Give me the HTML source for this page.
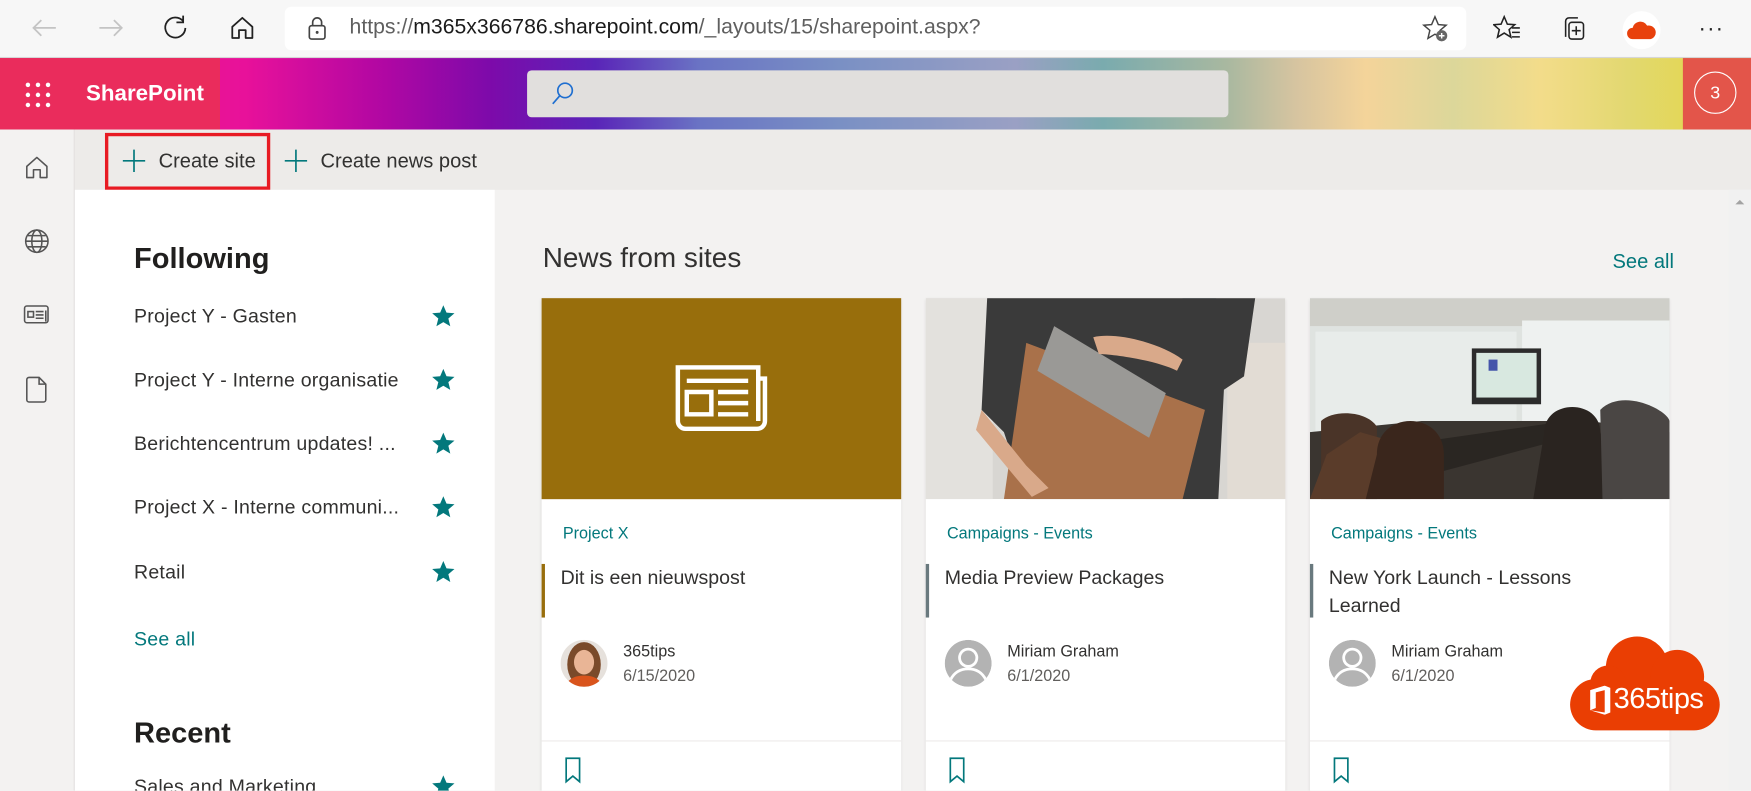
<!DOCTYPE html>
<html><head><meta charset="utf-8"><style>
html,body{margin:0;padding:0;width:1751px;height:791px;overflow:hidden;background:#f3f2f1}
#w{position:absolute;left:0;top:0;width:1568px;height:708px;transform:scale(1.11671);transform-origin:0 0;font-family:"Liberation Sans",Arial,sans-serif;overflow:hidden;background:#f3f2f1}
.a{position:absolute}
.item{position:absolute;left:120px;font-size:17.5px;color:#323130;letter-spacing:.2px}
.star{position:absolute;left:386px;width:22px;height:22px}
.card{position:absolute;top:267px;width:322px;height:460px;background:#fff;box-shadow:0 1px 3px rgba(0,0,0,.12)}
.site{position:absolute;left:19px;top:203px;font-size:14.5px;color:#03787c}
.title{position:absolute;left:0;top:238px;height:48px;border-left:3px solid #69797e;padding-left:14px;font-size:17.5px;color:#323130;line-height:25px;width:250px}
.auth{position:absolute;left:73px;top:309px;font-size:14.5px;color:#323130}
.date{position:absolute;left:73px;top:331px;font-size:14.5px;color:#605e5c}
.div{position:absolute;left:0;right:0;top:396px;border-top:1px solid #edebe9}
.bm{position:absolute;left:20px;top:411px}
</style></head><body><div id="w">
<div class="a" style="left:0;top:0;width:1568px;height:51px;background:#f7f7f7;border-bottom:1px solid #d6d6d6"></div>
<svg class="a" style="left:26px;top:13px" width="28" height="24" viewBox="0 0 28 24"><path d="M24 12H4M11 5L4 12l7 7" fill="none" stroke="#c4c4c4" stroke-width="1.6"/></svg>
<svg class="a" style="left:85px;top:13px" width="28" height="24" viewBox="0 0 28 24"><path d="M4 12h20M17 5l7 7-7 7" fill="none" stroke="#c4c4c4" stroke-width="1.6"/></svg>
<svg class="a" style="left:144px;top:12px" width="26" height="26" viewBox="0 0 26 26"><path d="M20 7A9 9 0 1 0 22 13M20 2v6h-6" fill="none" stroke="#222" stroke-width="1.6"/></svg>
<svg class="a" style="left:204px;top:12px" width="26" height="26" viewBox="0 0 26 26"><path d="M4 12L13 4l9 8v10h-6v-7h-6v7H4z" fill="none" stroke="#222" stroke-width="1.6" stroke-linejoin="round"/></svg>
<div class="a" style="left:255px;top:6px;width:1058px;height:39px;background:#fff;border-radius:6px"></div>
<svg class="a" style="left:274px;top:13px" width="20" height="24" viewBox="0 0 20 24"><rect x="3" y="10" width="14" height="12" rx="2" fill="none" stroke="#444" stroke-width="1.5"/><path d="M6 10V7a4 4 0 0 1 8 0v3" fill="none" stroke="#444" stroke-width="1.5"/><circle cx="10" cy="16" r="1.3" fill="#444"/></svg>
<div class="a" style="left:313px;top:14px;font-size:19px;color:#5f5f5f">https://<span style="color:#1b1b1b">m365x366786.sharepoint.com</span>/_layouts/15/sharepoint.aspx?</div>
<svg class="a" style="left:1273px;top:13px" width="28" height="28" viewBox="0 0 28 28"><path d="M12 2l3 7 7 .6-5.4 4.6 1.7 7.2L12 17.6 5.7 21.4l1.7-7.2L2 9.6 9 9z" fill="none" stroke="#444" stroke-width="1.3"/><circle cx="18" cy="19" r="5" fill="#666"/><path d="M18 16.5v5M15.5 19h5" stroke="#fff" stroke-width="1.3"/></svg>
<svg class="a" style="left:1337px;top:13px" width="28" height="26" viewBox="0 0 28 26"><path d="M10 2l2.8 6.6 6.6.5-5 4.4 1.6 6.8L10 16.6 4 20.3l1.6-6.8-5-4.4 6.6-.5z" fill="none" stroke="#222" stroke-width="1.4"/><path d="M17 12h7M17 16h7M17 20h7" stroke="#222" stroke-width="1.4"/></svg>
<svg class="a" style="left:1396px;top:12px" width="28" height="28" viewBox="0 0 28 28"><path d="M6 21V7a3 3 0 0 1 3-3h8" fill="none" stroke="#222" stroke-width="1.4"/><rect x="9" y="8" width="13" height="15" rx="2.5" fill="none" stroke="#222" stroke-width="1.4"/><path d="M15.5 11.5v8M11.5 15.5h8" stroke="#222" stroke-width="1.4"/></svg>
<div class="a" style="left:1453px;top:10px;width:34px;height:34px;border-radius:50%;background:#fff"></div>
<svg class="a" style="left:1457px;top:17px" width="26" height="20" viewBox="0 0 26 20"><path d="M5 18a5 5 0 0 1 0-10 7 7 0 0 1 13-2 5 5 0 0 1 3 12z" fill="#e8410c"/></svg>
<div class="a" style="left:1521px;top:15px;font-size:20px;color:#222;letter-spacing:1px">···</div>
<div class="a" style="left:0;top:52px;width:1568px;height:64px;background:linear-gradient(90deg,#e4207a 0%,#e8119a 14%,#b007a3 22%,#7d0aaa 28%,#5a24b8 34%,#6a74c4 40%,#7a90c4 48%,#9aa0c4 58%,#7aabae 63%,#a8b8a0 70%,#d6c4a0 74%,#f4d49a 78%,#dcd79a 83%,#f3dc8a 88%,#e2d870 93%,#e3d75a 96%)"></div>
<div class="a" style="left:0;top:52px;width:197px;height:64px;background:#ea2c5c"></div>
<svg class="a" style="left:22px;top:73px" width="24" height="24" viewBox="0 0 24 24" fill="#fff"><circle cx="3" cy="3" r="2"/><circle cx="12" cy="3" r="2"/><circle cx="21" cy="3" r="2"/><circle cx="3" cy="12" r="2"/><circle cx="12" cy="12" r="2"/><circle cx="21" cy="12" r="2"/><circle cx="3" cy="21" r="2"/><circle cx="12" cy="21" r="2"/><circle cx="21" cy="21" r="2"/></svg>
<div class="a" style="left:77px;top:73px;font-size:20px;font-weight:bold;color:#fff">SharePoint</div>
<div class="a" style="left:472px;top:63px;width:628px;height:42px;background:#e1dfdd;border-radius:4px"></div>
<svg class="a" style="left:492px;top:72px" width="24" height="24" viewBox="0 0 24 24"><circle cx="14" cy="9" r="6.5" fill="none" stroke="#1f6fd0" stroke-width="1.5"/><path d="M9.5 13.5L3 21" stroke="#1f6fd0" stroke-width="1.5"/></svg>
<div class="a" style="left:1507px;top:52px;width:61px;height:64px;background:#e3554a"></div>
<div class="a" style="left:1517px;top:64px;width:38px;height:38px;border:1.3px solid #fff;border-radius:50%;color:#fff;font-size:16px;text-align:center;line-height:38px;box-sizing:border-box">3</div>
<div class="a" style="left:0;top:116px;width:66px;height:600px;background:#f3f2f1;border-right:1px solid #e1dfdd"></div>
<svg class="a" style="left:21px;top:138px" width="24" height="24" viewBox="0 0 24 24"><path d="M3 11L12 3l9 8v10h-6v-7H9v7H3z" fill="none" stroke="#555" stroke-width="1.4" stroke-linejoin="round"/></svg>
<svg class="a" style="left:21px;top:204px" width="24" height="24" viewBox="0 0 24 24" fill="none" stroke="#555" stroke-width="1.4"><circle cx="12" cy="12" r="10"/><ellipse cx="12" cy="12" rx="4.5" ry="10"/><path d="M2 12h20M4 7h16M4 17h16"/></svg>
<svg class="a" style="left:20px;top:270px" width="26" height="24" viewBox="0 0 26 24" fill="none" stroke="#555" stroke-width="1.4"><rect x="2" y="4" width="21" height="15" rx="2"/><rect x="5" y="9" width="5" height="5"/><path d="M12 9h7M12 12h7M12 15h7M21 8v10"/></svg>
<svg class="a" style="left:22px;top:336px" width="22" height="26" viewBox="0 0 22 26" fill="none" stroke="#555" stroke-width="1.4"><path d="M4 2h9l6 6v14a2 2 0 0 1-2 2H4a2 2 0 0 1-2-2V4a2 2 0 0 1 2-2zM13 2v6h6"/></svg>
<div class="a" style="left:67px;top:116px;width:1501px;height:54px;background:#edebe9"></div>
<div class="a" style="left:94px;top:119px;width:148px;height:51px;border:3px solid #e81b23;box-sizing:border-box"></div>
<svg class="a" style="left:109px;top:133px" width="22" height="22" viewBox="0 0 22 22"><path d="M11 1v20M1 11h20" stroke="#03787c" stroke-width="1.5"/></svg>
<div class="a" style="left:142px;top:134px;font-size:18px;color:#323130">Create site</div>
<svg class="a" style="left:254px;top:133px" width="22" height="22" viewBox="0 0 22 22"><path d="M11 1v20M1 11h20" stroke="#03787c" stroke-width="1.5"/></svg>
<div class="a" style="left:287px;top:134px;font-size:18px;color:#323130">Create news post</div>
<div class="a" style="left:67px;top:170px;width:376px;height:540px;background:#fff"></div>
<div class="a" style="left:120px;top:216px;font-size:26px;font-weight:bold;color:#201f1e">Following</div>
<div class="item" style="top:273px">Project Y - Gasten</div>
<div class="item" style="top:330px">Project Y - Interne organisatie</div>
<div class="item" style="top:387px">Berichtencentrum updates! ...</div>
<div class="item" style="top:444px">Project X - Interne communi...</div>
<div class="item" style="top:502px">Retail</div>
<div class="item" style="top:562px;color:#03787c">See all</div>
<div class="a" style="left:120px;top:641px;font-size:26px;font-weight:bold;color:#201f1e">Recent</div>
<div class="item" style="top:694px">Sales and Marketing</div>
<svg class="star" style="top:272px" viewBox="0 0 24 24"><path d="M12 1.5l3.1 7.2 7.8.6-6 5.1 1.9 7.6L12 17.9 5.2 22l1.9-7.6-6-5.1 7.8-.6z" fill="#03787c"/></svg>
<svg class="star" style="top:329px" viewBox="0 0 24 24"><path d="M12 1.5l3.1 7.2 7.8.6-6 5.1 1.9 7.6L12 17.9 5.2 22l1.9-7.6-6-5.1 7.8-.6z" fill="#03787c"/></svg>
<svg class="star" style="top:386px" viewBox="0 0 24 24"><path d="M12 1.5l3.1 7.2 7.8.6-6 5.1 1.9 7.6L12 17.9 5.2 22l1.9-7.6-6-5.1 7.8-.6z" fill="#03787c"/></svg>
<svg class="star" style="top:443px" viewBox="0 0 24 24"><path d="M12 1.5l3.1 7.2 7.8.6-6 5.1 1.9 7.6L12 17.9 5.2 22l1.9-7.6-6-5.1 7.8-.6z" fill="#03787c"/></svg>
<svg class="star" style="top:501px" viewBox="0 0 24 24"><path d="M12 1.5l3.1 7.2 7.8.6-6 5.1 1.9 7.6L12 17.9 5.2 22l1.9-7.6-6-5.1 7.8-.6z" fill="#03787c"/></svg>
<svg class="star" style="top:693px" viewBox="0 0 24 24"><path d="M12 1.5l3.1 7.2 7.8.6-6 5.1 1.9 7.6L12 17.9 5.2 22l1.9-7.6-6-5.1 7.8-.6z" fill="#03787c"/></svg>
<div class="a" style="left:486px;top:217px;font-size:25px;color:#323130">News from sites</div>
<div class="a" style="left:1444px;top:224px;font-size:18px;color:#03787c">See all</div>
<div class="card" style="left:485px">
 <div class="a" style="left:0;top:0;width:322px;height:180px;background:#986e0c"></div>
 <svg class="a" style="left:119px;top:60px" width="84" height="60" viewBox="0 0 84 60" fill="none" stroke="#fff" stroke-width="4"><path d="M3 2h72v10h6v38a7 7 0 0 1-7 7H10a7 7 0 0 1-7-7z"/><path d="M75 12v38"/><path d="M11 14h55M11 24h22v20H11zM39 24h27M39 34h27M39 44h27"/></svg>
 <div class="site">Project X</div>
 <div class="title" style="border-left-color:#986e0c">Dit is een nieuwspost</div>
 <svg class="a" style="left:17px;top:306px" width="42" height="42" viewBox="0 0 42 42"><defs><clipPath id="c1"><circle cx="21" cy="21" r="21"/></clipPath></defs><g clip-path="url(#c1)"><rect width="42" height="42" fill="#e6e1dc"/><ellipse cx="21" cy="22" rx="15" ry="20" fill="#7a4a2a"/><ellipse cx="21" cy="20" rx="9" ry="11" fill="#e9b596"/><path d="M4 42c3-8 10-10 17-10s14 2 17 10z" fill="#d9541c"/></g></svg>
 <div class="auth">365tips</div><div class="date">6/15/2020</div>
 <div class="div"></div>
 <svg class="bm" width="16" height="24" viewBox="0 0 16 24"><path d="M2 1h12v21l-6-5-6 5z" fill="none" stroke="#03787c" stroke-width="1.5"/></svg>
</div>
<div class="card" style="left:829px">
 <svg class="a" style="left:0;top:0" width="322" height="180" viewBox="0 0 322 180"><rect width="322" height="180" fill="#d8d6d2"/><rect x="0" y="0" width="60" height="180" fill="#e3e1dd"/><rect x="230" y="0" width="30" height="180" fill="#9db4c4"/><rect x="270" y="40" width="52" height="140" fill="#e2dcd4"/><path d="M55 0h240l-10 70-18 12-5 98H90L70 120 50 100z" fill="#3a3a3a"/><path d="M90 40l160 60-20 80H70z" fill="#a9714a"/><path d="M115 25l100 60-15 40-100-60z" fill="#9a9996"/><path d="M150 35c20-5 60 5 80 20l-5 10c-20-10-60-15-70-15z" fill="#d9a98a"/><path d="M50 100l40 50 20 20-15 8-50-60z" fill="#d9a98a"/></svg>
 <div class="site">Campaigns - Events</div>
 <div class="title">Media Preview Packages</div>
 <svg class="a" style="left:17px;top:306px" width="42" height="42" viewBox="0 0 42 42"><defs><clipPath id="c2"><circle cx="21" cy="21" r="21"/></clipPath></defs><g clip-path="url(#c2)"><circle cx="21" cy="21" r="21" fill="#b3b3b3"/><circle cx="21" cy="16" r="9" fill="#fff"/><circle cx="21" cy="16" r="6.5" fill="#b3b3b3"/><path d="M5 36c4-8 10-10 16-10s12 2 16 10" fill="none" stroke="#fff" stroke-width="2.5"/></g></svg>
 <div class="auth">Miriam Graham</div><div class="date">6/1/2020</div>
 <div class="div"></div>
 <svg class="bm" width="16" height="24" viewBox="0 0 16 24"><path d="M2 1h12v21l-6-5-6 5z" fill="none" stroke="#03787c" stroke-width="1.5"/></svg>
</div>
<div class="card" style="left:1173px">
 <svg class="a" style="left:0;top:0" width="322" height="180" viewBox="0 0 322 180"><rect width="322" height="180" fill="#dfe3e0"/><rect x="0" y="0" width="322" height="25" fill="#cfcfc9"/><rect x="190" y="20" width="132" height="100" fill="#eef1f0"/><rect x="5" y="30" width="180" height="110" fill="#e8ecea"/><rect x="145" y="45" width="62" height="50" fill="#2c2c2c"/><rect x="149" y="49" width="54" height="40" fill="#d8e8e0"/><rect x="160" y="55" width="8" height="10" fill="#45a"/><path d="M0 180V120l100-10 150 0 72 10v60z" fill="#3a3530"/><path d="M90 130l140-20 20 10-150 40z" fill="#2a2622"/><path d="M10 110c10-10 40-10 50 5v65H10z" fill="#4a3428"/><path d="M15 140l30-20 35 10 10 50H0z" fill="#5a3c2a"/><path d="M60 140c0-40 60-40 60 0v40H50z" fill="#3a261c"/><path d="M210 120c0-30 50-30 50 0l20 60h-80z" fill="#2a2420"/><path d="M260 100c20-20 60 0 62 10v70h-60z" fill="#4a4644"/></svg>
 <div class="site">Campaigns - Events</div>
 <div class="title">New York Launch - Lessons Learned</div>
 <svg class="a" style="left:17px;top:306px" width="42" height="42" viewBox="0 0 42 42"><defs><clipPath id="c3"><circle cx="21" cy="21" r="21"/></clipPath></defs><g clip-path="url(#c3)"><circle cx="21" cy="21" r="21" fill="#b3b3b3"/><circle cx="21" cy="16" r="9" fill="#fff"/><circle cx="21" cy="16" r="6.5" fill="#b3b3b3"/><path d="M5 36c4-8 10-10 16-10s12 2 16 10" fill="none" stroke="#fff" stroke-width="2.5"/></g></svg>
 <div class="auth">Miriam Graham</div><div class="date">6/1/2020</div>
 <div class="div"></div>
 <svg class="bm" width="16" height="24" viewBox="0 0 16 24"><path d="M2 1h12v21l-6-5-6 5z" fill="none" stroke="#03787c" stroke-width="1.5"/></svg>
</div>
<svg class="a" style="left:1404px;top:568px" width="138" height="88" viewBox="0 0 138 88" fill="#ea3e03"><circle cx="62" cy="30" r="28"/><circle cx="98" cy="38" r="24"/><circle cx="36" cy="44" r="16"/><rect x="2" y="40" width="134" height="46" rx="23"/></svg>
<svg class="a" style="left:1423px;top:614px" width="20" height="26" viewBox="0 0 20 26"><path d="M1 4L14 0l5 2v22l-5 2L1 22l13 2V4L6 6v14L1 22z" fill="#fff"/></svg>
<div class="a" style="left:1445px;top:610px;font-size:26px;color:#fff;letter-spacing:-.5px">365tips</div>
<div class="a" style="left:1548px;top:170px;width:20px;height:540px;background:#f1f1f1"></div>
<svg class="a" style="left:1552px;top:176px" width="12" height="10" viewBox="0 0 12 10"><path d="M2 7l4-4 4 4z" fill="#a3a3a3"/></svg>
</div></body></html>
